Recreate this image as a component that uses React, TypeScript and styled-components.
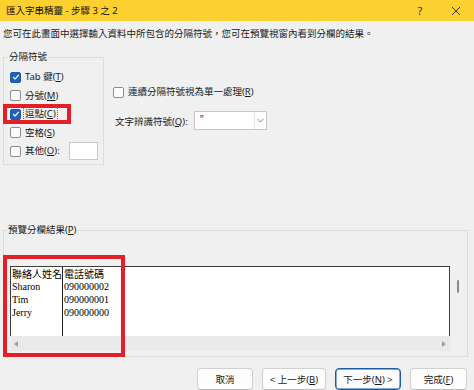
import React from 'react';
import styled, { createGlobalStyle } from 'styled-components';

const uiFont = `"Noto Sans", "Noto Sans CJK TC", sans-serif`;

const GlobalStyle = createGlobalStyle`
	html, body {
		margin: 0;
		padding: 0;
		background: #f0f0f0;
	}
	body {
		font-family: ${uiFont};
	}
`;

const Window = styled.div`
	position: relative;
	width: 474px;
	height: 390px;
	overflow: hidden;
	background: #f0f0f0;
	font-family: ${uiFont};
	font-size: 9.5px;
	color: #1a1a1a;
`;

const TitleBar = styled.div`
	display: flex;
	align-items: center;
	height: 21px;
	padding-left: 6px;
	background: #fcd02e;
`;

const Title = styled.div`
	flex: 1;
	line-height: 21px;
	white-space: nowrap;
	color: #111;
`;

const TitleButton = styled.div`
	display: flex;
	align-items: center;
	justify-content: center;
	width: 36px;
	height: 21px;
	color: #333;
	font-size: 11px;
`;

const Body = styled.div`
	padding: 0 6px 0 3px;
`;

const Description = styled.div`
	margin-top: 6px;
	height: 14px;
	line-height: 14px;
	white-space: nowrap;
`;

const MainRow = styled.div`
	display: flex;
	align-items: flex-start;
	gap: 9px;
	margin-top: 9px;
`;

const groupLine = '#dcdcdc';

const Group = styled.section<{ $width?: number }>`
	box-sizing: border-box;
	width: ${p => (p.$width ? `${p.$width}px` : 'auto')};
`;

const GroupTitle = styled.div<{ $lead?: number }>`
	display: flex;
	height: 14px;
	line-height: 14px;
	white-space: nowrap;

	&::before,
	&::after {
		content: '';
		margin-top: 7px;
		border-top: 1px solid ${groupLine};
	}
	&::before {
		width: ${p => p.$lead ?? 4}px;
		border-left: 1px solid ${groupLine};
	}
	&::after {
		flex: 1;
		border-right: 1px solid ${groupLine};
	}
`;

const GroupLabel = styled.span`
	padding: 0 1px;
`;

const GroupBody = styled.div`
	border: 1px solid ${groupLine};
	border-top: none;
`;

const DelimiterList = styled(GroupBody)`
	display: flex;
	flex-direction: column;
	padding: 4px 0 3.5px 6px;
`;

const CheckRow = styled.label<{ $height?: number }>`
	display: flex;
	align-items: center;
	gap: 3px;
	height: ${p => p.$height ?? 18.5}px;
	white-space: nowrap;
`;

const Box = styled.span<{ $checked?: boolean }>`
	display: flex;
	align-items: center;
	justify-content: center;
	flex: none;
	box-sizing: border-box;
	width: 11px;
	height: 11px;
	border-radius: 2px;
	border: 1px solid ${p => (p.$checked ? '#1a5aa6' : '#8c8c8c')};
	background: ${p => (p.$checked ? '#1f63b6' : '#fbfbfb')};
`;

const CheckText = styled.span<{ $focused?: boolean }>`
	line-height: 12px;
	padding: 0 1px;
	outline: ${p => (p.$focused ? '1px dotted #6a6a6a' : 'none')};
`;

const OtherInput = styled.span`
	box-sizing: border-box;
	width: 29px;
	height: 18px;
	margin-left: 5px;
	border: 1px solid #c9c9c9;
	background: #fff;
`;

const OptionsColumn = styled.div`
	display: flex;
	flex-direction: column;
	padding-top: 33px;
`;

const QualifierRow = styled.div`
	display: flex;
	align-items: center;
	gap: 6px;
	margin-top: 10px;
	padding-left: 2px;
	white-space: nowrap;
`;

const Select = styled.div`
	display: flex;
	box-sizing: border-box;
	width: 73px;
	height: 19px;
	border: 1px solid #c6c6c6;
	background: #fff;
`;

const SelectValue = styled.span`
	flex: 1;
	padding-left: 5px;
	line-height: 15px;
	font-size: 10px;
`;

const SelectArrow = styled.span`
	display: flex;
	align-items: center;
	justify-content: center;
	width: 11px;
	border-left: 1px solid #e3e3e3;
`;

const PreviewGroup = styled(Group)`
	margin-top: 58px;
`;

const PreviewBody = styled(GroupBody)`
	padding: 29px 1px 5px 6px;
`;

const Preview = styled.div`
	display: grid;
	grid-template-columns: 1fr 16px;
	grid-template-rows: 70px 15px;
`;

const Frame = styled.div`
	grid-column: 1;
	grid-row: 1;
	display: flex;
	box-sizing: border-box;
	border: 1px solid #3c3c3c;
	border-bottom: none;
	background: #fff;
	font-family: "Liberation Serif", "Noto Sans CJK TC", serif;
	font-size: 10px;
	color: #000;
`;

const Column = styled.div<{ $width?: number; $divider?: boolean }>`
	box-sizing: border-box;
	width: ${p => (p.$width ? `${p.$width}px` : 'auto')};
	padding: 1.5px 0 0 1px;
	border-right: ${p => (p.$divider ? '1px solid #222' : 'none')};
`;

const Cell = styled.div`
	height: 12.8px;
	line-height: 12.8px;
	white-space: nowrap;
`;

const VScroll = styled.div`
	grid-column: 2;
	grid-row: 1 / span 2;
	display: flex;
	justify-content: center;
	padding-top: 14px;
`;

const VThumb = styled.span`
	width: 2px;
	height: 13px;
	border-radius: 1px;
	background: #8a8a8a;
`;

const HScroll = styled.div`
	grid-column: 1;
	grid-row: 2;
	display: flex;
	align-items: center;
	justify-content: space-between;
	padding: 0 4px;
	background: #eaeaea;
`;

const ArrowLeft = styled.span`
	width: 0;
	height: 0;
	border-top: 3px solid transparent;
	border-bottom: 3px solid transparent;
	border-right: 4px solid #a0a0a0;
`;

const ArrowRight = styled.span`
	width: 0;
	height: 0;
	border-top: 3px solid transparent;
	border-bottom: 3px solid transparent;
	border-left: 4px solid #a0a0a0;
`;

const ButtonRow = styled.div`
	display: flex;
	justify-content: flex-end;
	gap: 9px;
	margin-top: 11px;
	padding-right: 1px;
`;

const Button = styled.button<{ $width: number; $default?: boolean }>`
	box-sizing: border-box;
	width: ${p => p.$width}px;
	height: 22px;
	padding: 0;
	border: 1px solid ${p => (p.$default ? '#1c5aa3' : '#d0d0d0')};
	border-bottom-color: ${p => (p.$default ? '#1c5aa3' : '#bcbcbc')};
	border-radius: 4px;
	background: #fdfdfd;
	box-shadow: ${p => (p.$default ? 'inset 0 0 0 0.5px #1c5aa3' : 'none')};
	font-family: ${uiFont};
	font-size: 9.5px;
	color: #1a1a1a;
	white-space: nowrap;
`;

const CommaHighlight = styled.div`
	position: absolute;
	left: 3px;
	top: 104px;
	width: 68px;
	height: 20px;
	box-sizing: border-box;
	border: 4px solid #e3202a;
	pointer-events: none;
`;

const PreviewHighlight = styled.div`
	position: absolute;
	left: 3px;
	top: 255px;
	width: 122px;
	height: 102px;
	box-sizing: border-box;
	border: 4px solid #e3202a;
	pointer-events: none;
`;

const Check = () => (
	<svg width="8" height="8" viewBox="0 0 8 8">
		<polyline points="1.2,4.2 3.2,6 6.8,1.8" fill="none" stroke="#fff" strokeWidth="1.2" />
	</svg>
);

const Checkbox = ({
	checked,
	focused,
	children
}: {
	checked?: boolean;
	focused?: boolean;
	children: React.ReactNode;
}) => (
	<>
		<Box $checked={checked}>{checked ? <Check /> : null}</Box>
		<CheckText $focused={focused}>{children}</CheckText>
	</>
);

const rows = [
	['Sharon', '090000002'],
	['Tim', '090000001'],
	['Jerry', '090000000']
];

export default function App() {
	return (
		<Window>
			<GlobalStyle />
			<TitleBar>
				<Title>匯入字串精靈 - 步驟 3 之 2</Title>
				<TitleButton>?</TitleButton>
				<TitleButton>
					<svg width="10" height="10" viewBox="0 0 10 10">
						<path d="M1 1 L9 9 M9 1 L1 9" stroke="#333" strokeWidth="1" />
					</svg>
				</TitleButton>
			</TitleBar>
			<Body>
				<Description>
					您可在此畫面中選擇輸入資料中所包含的分隔符號，您可在預覽視窗內看到分欄的結果。
				</Description>
				<MainRow>
					<Group $width={101}>
						<GroupTitle>
							<GroupLabel>分隔符號</GroupLabel>
						</GroupTitle>
						<DelimiterList>
							<CheckRow>
								<Checkbox checked>
									Tab 鍵(<u>T</u>)
								</Checkbox>
							</CheckRow>
							<CheckRow>
								<Checkbox>
									分號(<u>M</u>)
								</Checkbox>
							</CheckRow>
							<CheckRow>
								<Checkbox checked focused>
									逗點(<u>C</u>)
								</Checkbox>
							</CheckRow>
							<CheckRow>
								<Checkbox>
									空格(<u>S</u>)
								</Checkbox>
							</CheckRow>
							<CheckRow>
								<Checkbox>
									其他(<u>O</u>):
								</Checkbox>
								<OtherInput />
							</CheckRow>
						</DelimiterList>
					</Group>
					<OptionsColumn>
						<CheckRow $height={18}>
							<Checkbox>
								連續分隔符號視為單一處理(<u>R</u>)
							</Checkbox>
						</CheckRow>
						<QualifierRow>
							<span>
								文字辨識符號(<u>Q</u>):
							</span>
							<Select>
								<SelectValue>"</SelectValue>
								<SelectArrow>
									<svg width="7" height="5" viewBox="0 0 7 5">
										<polyline points="0.5,1 3.5,4 6.5,1" fill="none" stroke="#777" strokeWidth="0.9" />
									</svg>
								</SelectArrow>
							</Select>
						</QualifierRow>
					</OptionsColumn>
				</MainRow>
				<PreviewGroup>
					<GroupTitle $lead={3}>
						<GroupLabel>
							預覽分欄結果(<u>P</u>)
						</GroupLabel>
					</GroupTitle>
					<PreviewBody>
						<Preview>
							<Frame>
								<Column $width={52} $divider>
									<Cell>聯絡人姓名</Cell>
									{rows.map(r => (
										<Cell key={r[0]}>{r[0]}</Cell>
									))}
								</Column>
								<Column>
									<Cell>電話號碼</Cell>
									{rows.map(r => (
										<Cell key={r[1]}>{r[1]}</Cell>
									))}
								</Column>
							</Frame>
							<VScroll>
								<VThumb />
							</VScroll>
							<HScroll>
								<ArrowLeft />
								<ArrowRight />
							</HScroll>
						</Preview>
					</PreviewBody>
				</PreviewGroup>
				<ButtonRow>
					<Button $width={56}>取消</Button>
					<Button $width={64}>
						&lt; 上一步(<u>B</u>)
					</Button>
					<Button $width={66} $default>
						下一步(<u>N</u>) &gt;
					</Button>
					<Button $width={57}>
						完成(<u>F</u>)
					</Button>
				</ButtonRow>
			</Body>
			<CommaHighlight />
			<PreviewHighlight />
		</Window>
	);
}
